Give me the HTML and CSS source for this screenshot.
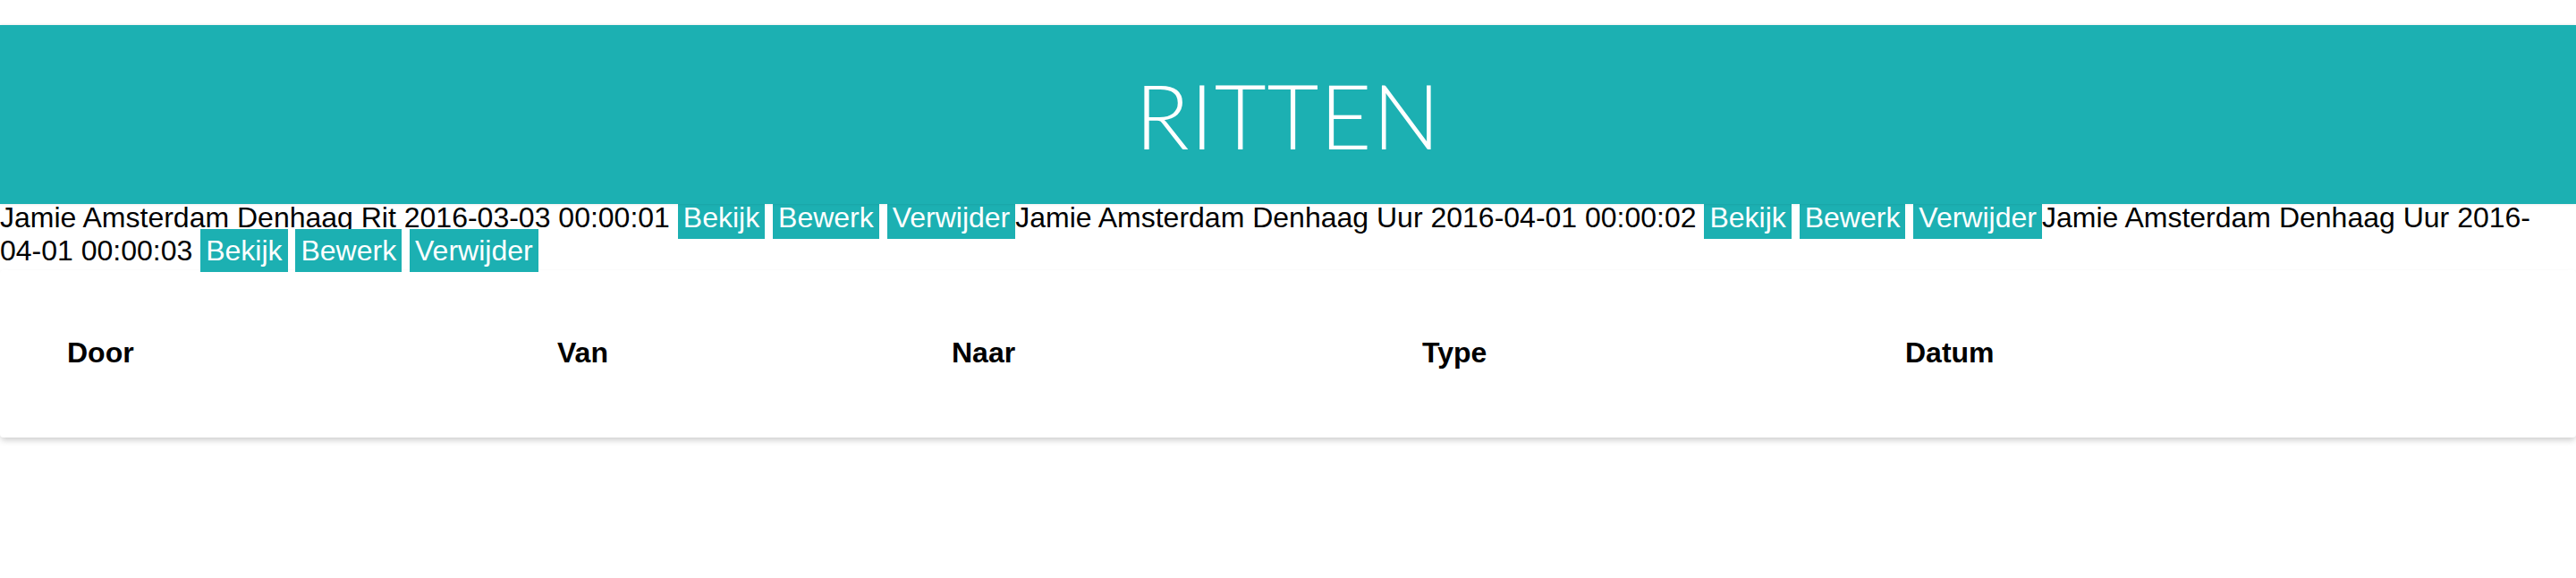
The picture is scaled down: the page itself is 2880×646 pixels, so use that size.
FILE: index.html
```html
<!DOCTYPE html>
<html lang="nl">
<head>
    <meta charset="UTF-8">
    <meta name="viewport" content="width=device-width, initial-scale=1.0">
    <title>Ritten</title>
    <link rel="stylesheet" href="styles.css">
</head>
<body>

<header class="page-header">
    <h1>RITTEN</h1>
</header>

<div class="rides"><span class="ride">Jamie Amsterdam Denhaag Rit 2016-03-03 00:00:01 <a class="btn" href="#">Bekijk</a> <a class="btn" href="#">Bewerk</a> <a class="btn" href="#">Verwijder</a></span><span class="ride">Jamie Amsterdam Denhaag Uur 2016-04-01 00:00:02 <a class="btn" href="#">Bekijk</a> <a class="btn" href="#">Bewerk</a> <a class="btn" href="#">Verwijder</a></span><span class="ride">Jamie Amsterdam Denhaag Uur 2016-04-01 00:00:03 <a class="btn" href="#">Bekijk</a> <a class="btn" href="#">Bewerk</a> <a class="btn" href="#">Verwijder</a></span></div>

<div class="card">
    <table class="rides-table">
        <thead>
            <tr>
                <th class="col-door">Door</th>
                <th class="col-van">Van</th>
                <th class="col-naar">Naar</th>
                <th class="col-type">Type</th>
                <th>Datum</th>
            </tr>
        </thead>
        <tbody></tbody>
    </table>
</div>

</body>
</html>
```

FILE: styles.css
```css
/* Base */
html, body {
    min-height: 100%;
}
body {
    margin: 0;
    padding: 28px 0 60px;
    font-family: "Liberation Sans", Arial, Helvetica, sans-serif;
    font-size: 32px;
    color: #000;
    background-color: #fff;
}

/* Teal title bar */
.page-header {
    position: relative;
    z-index: 1;
    height: 200px;
    display: flex;
    align-items: center;
    justify-content: center;
    background-color: #1cb0b2;
    box-shadow: 0 0 3px rgba(0, 0, 0, 0.12);
}
.page-header h1 {
    margin: 0;
    font-family: Lato, "Open Sans", sans-serif;
    font-weight: 300;
    font-size: 100px;
    color: #fff;
    letter-spacing: 1px;
}

/* Loose ride rows */
.rides {
    margin-top: -3px;
    padding-right: 20px;
}
.btn {
    padding: 6px;
    background-color: #1cb0b2;
    color: #fff;
    text-decoration: none;
}

/* Table card */
.card {
    margin-top: 3px;
    padding: 44px 0 46px 36px;
    background-color: #fff;
    border-radius: 4px;
    box-shadow: 0 4px 7px -1px rgba(0, 0, 0, 0.2);
}
.rides-table {
    width: 100%;
    border-collapse: collapse;
    table-layout: fixed;
}
.rides-table th {
    box-sizing: border-box;
    padding: 30px 0 30px 39px;
    text-align: left;
    font-weight: bold;
}
.col-door { width: 548px; }
.col-van { width: 441px; }
.col-naar { width: 526px; }
.col-type { width: 540px; }
```
